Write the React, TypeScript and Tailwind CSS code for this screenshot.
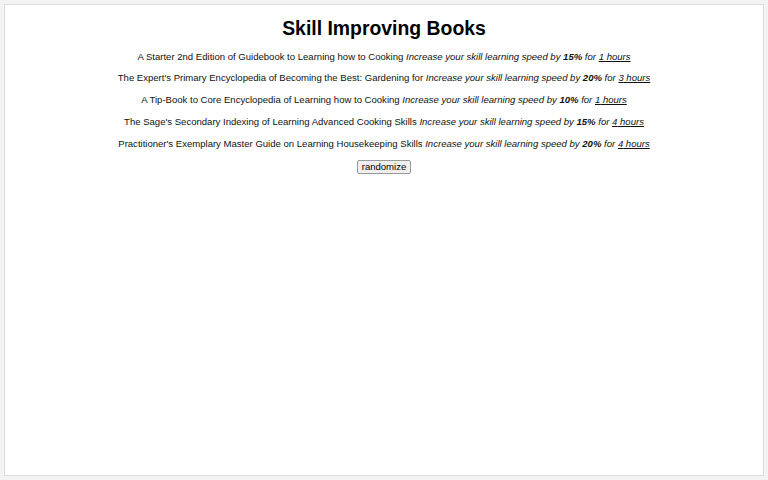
import React from "react";

type Book = { title: string; pct: number; hours: number };

const books: Book[] = [
  { title: "A Starter 2nd Edition of Guidebook to Learning how to Cooking", pct: 15, hours: 1 },
  { title: "The Expert's Primary Encyclopedia of Becoming the Best: Gardening for", pct: 20, hours: 3 },
  { title: "A Tip-Book to Core Encyclopedia of Learning how to Cooking", pct: 10, hours: 1 },
  { title: "The Sage's Secondary Indexing of Learning Advanced Cooking Skills", pct: 15, hours: 4 },
  { title: "Practitioner's Exemplary Master Guide on Learning Housekeeping Skills", pct: 20, hours: 4 },
];

export default function App() {
  return (
    <div
      className="w-[768px] h-[480px] bg-[#f3f3f3] p-[4px] text-black"
      style={{ fontFamily: '"Liberation Sans", Arial, sans-serif' }}
    >
      <div className="h-[472px] bg-white border border-[#dcdcdc] pt-[12px] flex flex-col items-center">
        <h1 className="text-[19.4px] leading-[23px] font-bold">Skill Improving Books</h1>
        <div className="mt-[10.5px] flex flex-col items-center gap-[9.75px] text-[9.55px] leading-[12px] text-[#111]">
          {books.map((b, i) => (
            <p key={i} className="whitespace-nowrap">
              {b.title}{" "}
              <i>
                Increase your skill learning speed by <b>{b.pct}%</b> for{" "}
                <span className="underline">{b.hours} hours</span>
              </i>
            </p>
          ))}
        </div>
        <button className="mt-[10px] h-[14px] px-[4px] text-[9.55px] leading-[12px] bg-[#efefef] border border-[#9a9a9a] rounded-[2px]">
          randomize
        </button>
      </div>
    </div>
  );
}
